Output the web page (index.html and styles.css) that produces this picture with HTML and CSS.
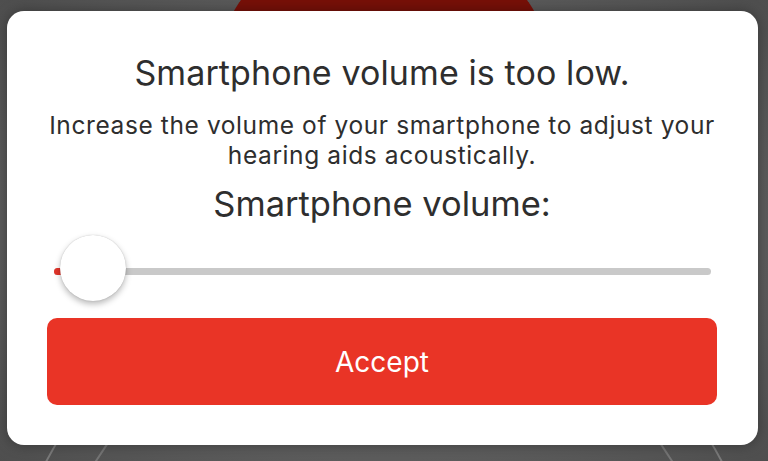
FILE: index.html
```html
<!DOCTYPE html>
<html>
<head>
    <title>Smartphone volume</title>
    <meta name="viewport" content="width=device-width, initial-scale=1">
    <link rel="stylesheet" href="styles.css">
</head>
<body>
    <!-- Dimmed app screen behind the dialog -->
    <svg class="backdrop" width="768" height="461" viewBox="0 0 768 461">
        <circle cx="384" cy="99" r="174" fill="#781008"/>
        <circle cx="384" cy="640" r="382" fill="none" stroke="#7a7a7a" stroke-width="2"/>
        <circle cx="384" cy="640" r="339" fill="none" stroke="#757575" stroke-width="2"/>
    </svg>

    <div class="dialog">
        <h1 class="title">Smartphone volume is too low.</h1>
        <p class="message">Increase the volume of your smartphone to adjust your<br>hearing aids acoustically.</p>
        <h2 class="label">Smartphone volume:</h2>
        <div class="slider">
            <div class="track"><div class="fill"></div></div>
            <div class="thumb"></div>
        </div>
        <button class="accept">Accept</button>
    </div>
</body>
</html>
```

FILE: styles.css
```css
body {
    font-family: Inter, "Noto Sans", sans-serif;
    margin: 0;
    padding: 0;
    width: 768px;
    height: 461px;
    overflow: hidden;
    position: relative;
    background: radial-gradient(ellipse at center, #6a6a6a 0%, #5c5c5c 70%, #4e4e4e 100%);
}

.backdrop {
    position: absolute;
    left: 0;
    top: 0;
}

.dialog {
    position: relative;
    margin: 11px 10px 0 7px;
    width: 751px;
    height: 434px;
    box-sizing: border-box;
    padding: 42px 41px 40px 40px;
    background-color: #ffffff;
    border-radius: 17px;
    box-shadow: 0 0 14px rgba(0, 0, 0, 0.35);
    display: flex;
    flex-direction: column;
    align-items: stretch;
    text-align: center;
    color: #2e2e2e;
}

.title {
    margin: 0;
    font-size: 34px;
    font-weight: 400;
    line-height: 40px;
    letter-spacing: 0.1px;
}

.message {
    margin: 17px 0 0 0;
    font-size: 24.5px;
    line-height: 30px;
    letter-spacing: 0.6px;
    white-space: nowrap;
}

.label {
    margin: 14px 0 0 0;
    font-size: 34.5px;
    font-weight: 400;
    line-height: 40px;
}

.slider {
    position: relative;
    margin-top: 11px;
    height: 70px;
    display: flex;
    align-items: center;
    padding: 3px 6px 0 7px;
    box-sizing: border-box;
}

.track {
    flex: 1;
    height: 7px;
    border-radius: 4px;
    background-color: #c9c9c9;
    overflow: hidden;
}

.fill {
    width: 14px;
    height: 100%;
    background-color: #e3342a;
}

.thumb {
    position: absolute;
    left: 13px;
    top: 0;
    width: 66px;
    height: 66px;
    border-radius: 50%;
    background-color: #ffffff;
    box-shadow: 0 3px 6px rgba(0, 0, 0, 0.28), 0 0 1px rgba(0, 0, 0, 0.25);
}

.accept {
    margin-top: 13px;
    height: 87px;
    border: none;
    border-radius: 10px;
    background-color: #e93426;
    color: #ffffff;
    font-family: Inter, "Noto Sans", sans-serif;
    font-size: 28px;
    cursor: pointer;
}
```
